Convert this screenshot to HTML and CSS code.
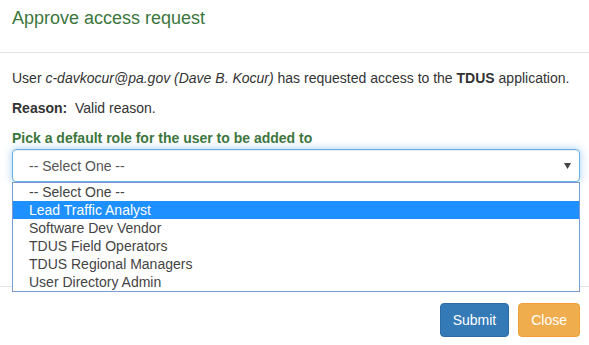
FILE: index.html
```html
<!DOCTYPE html>
<html>
<head>
<meta charset="utf-8">
<link rel="stylesheet" href="styles.css">
</head>
<body>
<div class="modal">
  <div class="modal-header">
    <h4 class="modal-title">Approve access request</h4>
  </div>
  <div class="modal-body">
    <p class="line">User <em>c-davkocur@pa.gov (Dave B. Kocur)</em> has requested access to the <strong>TDUS</strong> application.</p>
    <p class="line"><strong>Reason:</strong>&nbsp; Valid reason.</p>
    <div class="form-group">
      <label class="role-label">Pick a default role for the user to be added to</label>
      <div class="select-wrap">
        <div class="select">
          <span>-- Select One --</span>
          <svg class="caret" width="7" height="6" viewBox="0 0 7 6"><path d="M0 0H7L3.5 6Z" fill="#444"/></svg>
        </div>
        <ul class="options">
          <li>-- Select One --</li>
          <li class="active">Lead Traffic Analyst</li>
          <li>Software Dev Vendor</li>
          <li>TDUS Field Operators</li>
          <li>TDUS Regional Managers</li>
          <li>User Directory Admin</li>
        </ul>
      </div>
    </div>
  </div>
  <div class="modal-footer">
    <button class="btn btn-primary">Submit</button>
    <button class="btn btn-warning">Close</button>
  </div>
</div>
</body>
</html>
```

FILE: styles.css
```css
html, body {
  margin: 0;
  padding: 0;
  background: #fff;
}
body {
  font-family: "Liberation Sans", Arial, sans-serif;
  font-size: 14px;
  line-height: 20px;
  color: #333;
  width: 589px;
  height: 345px;
  overflow: hidden;
}
.modal-header {
  padding: 8px 12px 24px;
  border-bottom: 1px solid #e5e5e5;
}
.modal-title {
  margin: 0;
  font-size: 18px;
  line-height: 20px;
  font-weight: normal;
  color: #3c763d;
}
.modal-body {
  padding: 15px 9px 0 12px;
  height: 218px;
}
.line {
  margin: 0 0 10px;
}
.role-label {
  display: block;
  font-weight: bold;
  color: #3c763d;
  margin-bottom: 1px;
}
.select-wrap {
  position: relative;
}
.select {
  box-sizing: border-box;
  height: 33px;
  border: 1px solid #66afe9;
  border-radius: 4px;
  box-shadow: inset 0 1px 1px rgba(0,0,0,.075), 0 0 8px rgba(102,175,233,.6);
  display: flex;
  align-items: center;
  justify-content: space-between;
  padding: 0 8px 0 16px;
  color: #555;
}
.caret {
  display: block;
}
.options {
  position: absolute;
  left: 0;
  right: 0;
  top: 33px;
  margin: 0;
  padding: 0;
  list-style: none;
  background: #fff;
  border: 1px solid #7a9ad6;
  z-index: 2;
}
.options li {
  height: 18px;
  line-height: 18px;
  padding-left: 16px;
  color: #444;
}
.options li.active {
  background: #1e90ff;
  color: #fff;
}
.modal-footer {
  border-top: 1px solid #e5e5e5;
  padding: 16px 9px 0 12px;
  display: flex;
  justify-content: flex-end;
  gap: 9px;
}
.btn {
  font-family: "Liberation Sans", Arial, sans-serif;
  font-size: 14px;
  line-height: 20px;
  height: 34px;
  padding: 6px 12px;
  border: 1px solid transparent;
  border-radius: 4px;
  color: #fff;
  cursor: pointer;
}
.btn-primary {
  background: #337ab7;
  border-color: #2e6da4;
}
.btn-warning {
  background: #f0ad4e;
  border-color: #eea236;
}
```
